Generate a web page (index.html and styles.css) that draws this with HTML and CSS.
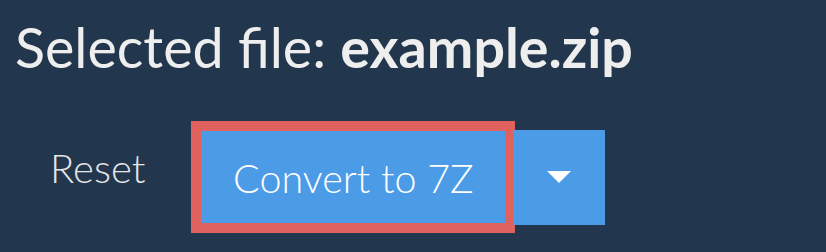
FILE: index.html
```html
<!DOCTYPE html>
<html lang="en">
    <head>
        <meta charset="UTF-8">
        <title>convert</title>
        <link rel="stylesheet" href="styles.css">
    </head>
    <body>
    <div id="id-div-container">
        <h1 class="file-title">Selected file: <b>example.zip</b></h1>
        <div class="action-row">
            <a class="btn-reset" href="#">Reset</a>
            <div class="btn-group">
                <div class="focus-ring">
                    <button class="btn-convert">Convert to 7Z</button>
                </div>
                <button class="btn-drop"><span class="caret"></span></button>
            </div>
        </div>
    </div>
    </body>
</html>
```

FILE: styles.css
```css
body {
    margin: 0;
    background-color: #22374d;
    font-family: Lato, "Noto Sans", sans-serif;
    color: #eeeeee;
}
#id-div-container {
    padding: 13px 0 0 15px;
}
.file-title {
    margin: 0;
    font-size: 55.6px;
    font-weight: 400;
    line-height: 67px;
}
.file-title b {
    font-weight: 700;
}
.action-row {
    display: flex;
    align-items: center;
    margin-top: 41px;
}
.btn-reset {
    font-size: 40px;
    font-weight: 300;
    color: #e6e6e6;
    text-decoration: none;
    margin-left: 35px;
    margin-right: 46px;
    margin-top: -19px;
}
.btn-group {
    display: flex;
    align-items: center;
}
.focus-ring {
    border: 10px solid #df625f;
    display: flex;
}
.btn-convert {
    width: 304px;
    height: 92px;
    border: none;
    background-color: #4b9be7;
    color: #fff;
    font-family: Lato, "Noto Sans", sans-serif;
    font-size: 39.5px;
    font-weight: 300;
    padding: 0;
}
.btn-drop {
    width: 92px;
    height: 95px;
    margin-left: -2px;
    border: none;
    background-color: #4b9be7;
    position: relative;
    z-index: 1;
    padding: 0;
}
.caret {
    display: block;
    margin: 0 auto;
    width: 0;
    height: 0;
    border-left: 12px solid transparent;
    border-right: 12px solid transparent;
    border-top: 12px solid #fff;
}
```
